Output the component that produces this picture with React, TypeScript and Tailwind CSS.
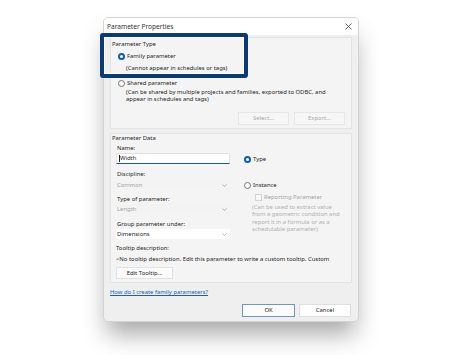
import React from "react";

const font = { fontFamily: '"Noto Sans", "Open Sans", Arial, sans-serif' };

function Radio({ checked }: { checked?: boolean }) {
  return checked ? (
    <span className="flex h-[7px] w-[7px] shrink-0 items-center justify-center rounded-full bg-[#0f5cb0]">
      <span className="h-[3px] w-[3px] rounded-full bg-white" />
    </span>
  ) : (
    <span className="h-[7px] w-[7px] shrink-0 rounded-full border border-[#777] bg-[#fafafa]" />
  );
}

function Chevron() {
  return (
    <svg width="5" height="3" viewBox="0 0 5 3" className="shrink-0">
      <path d="M0.5 0.5 L2.5 2.5 L4.5 0.5" fill="none" stroke="#9a9a9a" strokeWidth="0.7" />
    </svg>
  );
}

function Select({ value, enabled }: { value: string; enabled?: boolean }) {
  return (
    <div
      className={
        "flex h-[10px] w-[114px] items-center justify-between pl-[1px] pr-[3px] leading-[10px] " +
        (enabled ? "bg-white text-[#1b1b1b]" : "bg-[#f3f3f3] text-[#a3a3a3]")
      }
    >
      <span>{value}</span>
      <Chevron />
    </div>
  );
}

function Line({ children, className = "" }: { children: React.ReactNode; className?: string }) {
  return <div className={"h-[8px] leading-[8px] whitespace-nowrap " + className}>{children}</div>;
}

export default function App() {
  return (
    <div className="relative h-[355px] w-[474px] overflow-hidden bg-white pl-[103px] pt-[17px]" style={font}>
      <div className="flex h-[305px] w-[256px] flex-col overflow-hidden rounded-[5px] border border-[#d4d4d4] bg-[#efefef] text-[5.9px] text-[#1e1e1e] shadow-[0_16px_24px_-4px_rgba(0,0,0,0.35)]">
        {/* title bar */}
        <div className="flex h-[17px] shrink-0 items-center justify-between bg-white pl-[3px] pr-[6px]">
          <span className="text-[6.6px] text-[#333]">Parameter Properties</span>
          <svg width="7" height="7" viewBox="0 0 7 7">
            <path d="M0.5 0.5 L6.5 6.5 M6.5 0.5 L0.5 6.5" stroke="#444" strokeWidth="0.8" />
          </svg>
        </div>

        <div className="flex flex-col px-[6px] pt-[2px]">
          {/* Parameter Type */}
          <div className="flex h-[92px] flex-col border border-[#e3e3e3] bg-[#f4f4f4] pl-[1px] pt-[2px]">
            <Line>Parameter Type</Line>
            <div className="mt-[4px] flex h-[8px] items-center gap-[2px] pl-[6px]">
              <Radio checked />
              <span className="leading-[8px]">Family parameter</span>
            </div>
            <Line className="mt-[4px] pl-[14px]">(Cannot appear in schedules or tags)</Line>
            <div className="mt-[7px] flex h-[8px] items-center gap-[2px] pl-[6px]">
              <Radio />
              <span className="leading-[8px]">Shared parameter</span>
            </div>
            <div className="mt-[2px] pl-[14px] leading-[7px]">
              <div className="h-[7px] whitespace-nowrap">(Can be shared by multiple projects and families, exported to ODBC, and</div>
              <div className="h-[7px] whitespace-nowrap">appear in schedules and tags)</div>
            </div>
            <div className="mt-[9px] flex justify-end gap-[5px] pr-[6px]">
              <div className="flex h-[13px] w-[51px] items-center justify-center border border-[#e6e6e6] bg-[#f6f6f6] text-[#a8a8a8]">
                Select...
              </div>
              <div className="flex h-[13px] w-[51px] items-center justify-center border border-[#e6e6e6] bg-[#f6f6f6] text-[#a8a8a8]">
                Export...
              </div>
            </div>
          </div>

          {/* Parameter Data */}
          <div className="mt-[4px] flex h-[150px] flex-col border border-[#e3e3e3] bg-[#f4f4f4] pl-[1px]">
            <Line>Parameter Data</Line>
            <div className="mt-[2px] flex pl-[4px]">
              <div className="flex w-[114px] flex-col">
                <Line className="pl-[1px]">Name:</Line>
                <div className="mt-[1px] flex h-[11px] items-center border border-[#e2e2e2] border-b-[#0f5cb0] bg-white pl-[2px]">
                  <span className="mr-[0.5px] h-[7px] w-[0.5px] bg-[#222]" />
                  <span>Width</span>
                </div>
                <Line className="mt-[6px] pl-[1px]">Discipline:</Line>
                <div className="mt-[2px]">
                  <Select value="Common" />
                </div>
                <Line className="mt-[5px] pl-[1px]">Type of parameter:</Line>
                <div className="mt-[1px]">
                  <Select value="Length" />
                </div>
                <Line className="mt-[6px] pl-[1px]">Group parameter under:</Line>
                <div className="mt-[1px]">
                  <Select value="Dimensions" enabled />
                </div>
              </div>
              <div className="ml-[14px] flex flex-col pt-[11px]">
                <div className="flex h-[8px] items-center gap-[2px]">
                  <Radio checked />
                  <span className="leading-[8px]">Type</span>
                </div>
                <div className="mt-[18px] flex h-[8px] items-center gap-[2px]">
                  <Radio />
                  <span className="leading-[8px]">Instance</span>
                </div>
                <div className="mt-[4px] flex h-[8px] items-center gap-[2px] pl-[11px] text-[#a3a3a3]">
                  <span className="h-[7px] w-[7px] border border-[#d2d2d2] bg-[#f7f7f7]" />
                  <span className="leading-[8px]">Reporting Parameter</span>
                </div>
                <div className="mt-[3px] pl-[8px] leading-[7.3px] text-[#b0b0b0]">
                  <div className="h-[7.3px] whitespace-nowrap">(Can be used to extract value</div>
                  <div className="h-[7.3px] whitespace-nowrap">from a geometric condition and</div>
                  <div className="h-[7.3px] whitespace-nowrap">report it in a formula or as a</div>
                  <div className="h-[7.3px] whitespace-nowrap">schedulable parameter)</div>
                </div>
              </div>
            </div>
            <div className="flex flex-col pl-[4px]">
              <Line className="mt-[5px]">Tooltip description:</Line>
              <Line className="mt-[3px]">
                &lt;No tooltip description. Edit this parameter to write a custom tooltip. Custom
              </Line>
              <div className="mt-[4px] flex h-[12px] w-[57px] items-center justify-center border border-[#e2e2e2] bg-[#fbfbfb]">
                Edit Tooltip...
              </div>
            </div>
          </div>

          <div className="mt-[5px] h-[8px] leading-[8px] text-[#1a5fb4] underline">
            How do I create family parameters?
          </div>

          <div className="mt-[8px] flex justify-end gap-[4px] pr-[1px]">
            <div className="flex h-[13px] w-[53px] items-center justify-center border border-[#6d96cf] bg-[#fbfbfb]">
              OK
            </div>
            <div className="flex h-[13px] w-[52px] items-center justify-center border border-[#dedede] bg-[#fdfdfd]">
              Cancel
            </div>
          </div>
        </div>
      </div>

      {/* highlight overlay */}
      <div className="absolute left-[100px] top-[33px] h-[45px] w-[148px] rounded-[3px] border-[4px] border-[#0b3a74]">
        <div className="h-full w-full border border-white" />
      </div>
    </div>
  );
}
